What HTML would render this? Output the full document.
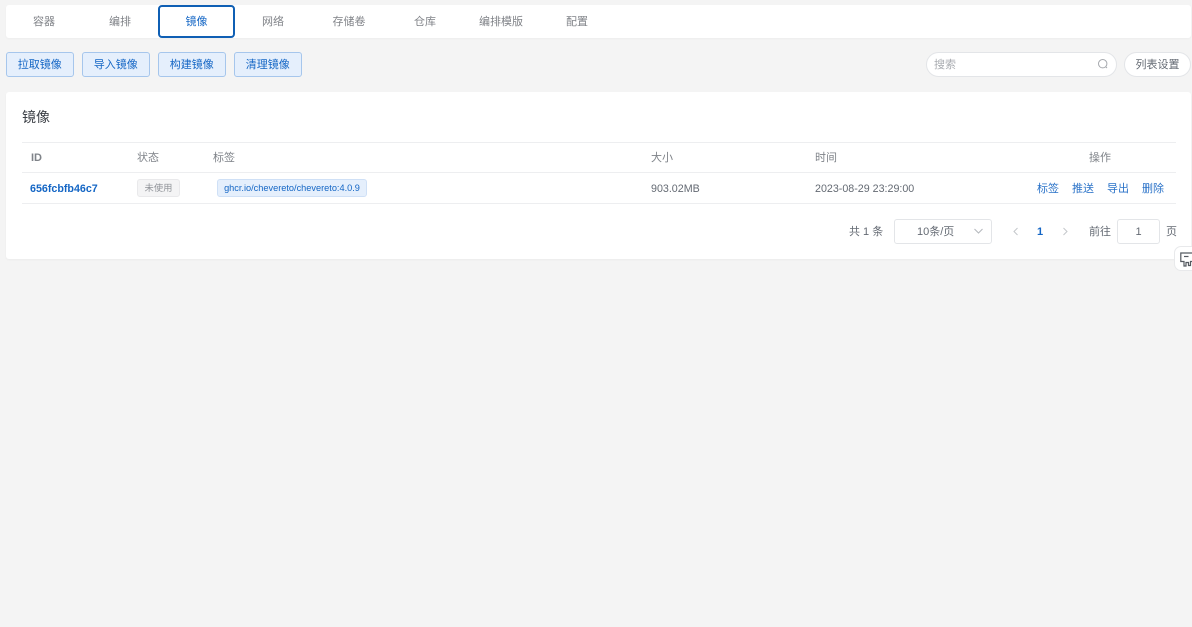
<!DOCTYPE html>
<html lang="zh">
<head>
<meta charset="utf-8">
<style>
html,body{margin:0;padding:0;width:1192px;height:627px;overflow:hidden;background:#f4f4f4;}
body{position:relative;font-family:"Liberation Sans","Noto Sans CJK SC",sans-serif;font-size:11px;color:#646a73;}
.a{position:absolute;white-space:nowrap;line-height:14px;}
.c{text-align:center;}
.box{position:absolute;box-sizing:border-box;}
.btn{position:absolute;box-sizing:border-box;top:52px;height:25px;width:67.5px;background:#e5effc;border:1px solid #a6c6ec;border-radius:3px;color:#1466c5;text-align:center;line-height:24px;font-size:11px;}
.hl{position:absolute;left:22px;width:1154px;height:1px;background:#edeef0;}
.th{color:#7f8389;}
.lnk{color:#2a72c8;}
.n{font-size:10.7px;}
</style>
</head>
<body>
<div class="box" style="left:6px;top:5px;width:1185px;height:33px;background:#fff;border-radius:3px;box-shadow:0 1px 2px rgba(0,0,0,.03)"></div>
<div class="a c" style="left:6px;top:15px;width:76px;color:#808388">容器</div>
<div class="a c" style="left:82px;top:15px;width:76px;color:#808388">编排</div>
<div class="box c" style="left:158px;top:5px;width:77px;height:33px;border:2px solid #0f5fb4;border-radius:4px;background:#fff;color:#1466c5;line-height:30px;text-align:center">镜像</div>
<div class="a c" style="left:235px;top:15px;width:76px;color:#808388">网络</div>
<div class="a c" style="left:311px;top:15px;width:76px;color:#808388">存储卷</div>
<div class="a c" style="left:387px;top:15px;width:76px;color:#808388">仓库</div>
<div class="a c" style="left:463px;top:15px;width:76px;color:#808388">编排模版</div>
<div class="a c" style="left:539px;top:15px;width:76px;color:#808388">配置</div>

<div class="btn" style="left:6px">拉取镜像</div>
<div class="btn" style="left:82px">导入镜像</div>
<div class="btn" style="left:158px">构建镜像</div>
<div class="btn" style="left:234px">清理镜像</div>

<div class="box" style="left:926px;top:52px;width:191px;height:25px;background:#fff;border:1px solid #e3e5e8;border-radius:13px"></div>
<div class="a" style="left:934px;top:58px;color:#a8abb0">搜索</div>
<svg class="box" style="left:1097px;top:58px" width="12" height="12" viewBox="0 0 12 12" fill="none" stroke="#a5a8ad" stroke-width="1"><circle cx="5.7" cy="5.7" r="4.2"/><path d="M8.8 8.8L10 10"/></svg>
<div class="box" style="left:1124px;top:52px;width:67px;height:25px;background:#fff;border:1px solid #e3e5e8;border-radius:13px;text-align:center;line-height:24px;color:#646a73">列表设置</div>

<div class="box" style="left:6px;top:92px;width:1185px;height:167px;background:#fff;border-radius:3px;box-shadow:0 1px 2px rgba(0,0,0,.04)"></div>
<div class="a" style="left:22px;top:108px;font-size:14px;line-height:18px;color:#3d4147">镜像</div>
<div class="hl" style="top:142px"></div>
<div class="hl" style="top:172px"></div>
<div class="hl" style="top:203px"></div>

<div class="a th" style="left:31px;top:151px;font-weight:bold">ID</div>
<div class="a th" style="left:137px;top:151px">状态</div>
<div class="a th" style="left:213px;top:151px">标签</div>
<div class="a th" style="left:651px;top:151px">大小</div>
<div class="a th" style="left:815px;top:151px">时间</div>
<div class="a th" style="left:1089px;top:151px">操作</div>

<div class="a n" style="left:30px;top:182px;font-weight:bold;color:#1466c5">656fcbfb46c7</div>
<div class="box" style="left:137px;top:179px;width:43px;height:18px;background:#f4f4f5;border:1px solid #e9e9eb;border-radius:3px;text-align:center;line-height:17px;color:#909399;font-size:9.3px">未使用</div>
<div class="box" style="left:217px;top:179px;width:150px;height:18px;background:#e5effc;border:1px solid #cfe0f6;border-radius:3px;text-align:center;line-height:17px;color:#1466c5;font-size:9.2px">ghcr.io/chevereto/chevereto:4.0.9</div>
<div class="a n" style="left:651px;top:182px;color:#646a73">903.02MB</div>
<div class="a n" style="left:815px;top:182px;color:#646a73">2023-08-29 23:29:00</div>
<div class="a lnk" style="left:1037px;top:182px">标签</div>
<div class="a lnk" style="left:1072px;top:182px">推送</div>
<div class="a lnk" style="left:1107px;top:182px">导出</div>
<div class="a lnk" style="left:1142px;top:182px">删除</div>

<div class="a" style="left:849px;top:225px;color:#646a73">共 1 条</div>
<div class="box" style="left:894px;top:219px;width:98px;height:25px;background:#fff;border:1px solid #e3e5e8;border-radius:3px"></div>
<div class="a" style="left:917px;top:225px;color:#646a73">10条/页</div>
<svg class="box" style="left:973px;top:227px" width="11" height="8" viewBox="0 0 11 8" fill="none" stroke="#b4b7bc" stroke-width="1"><path d="M1.5 2L5.5 6L9.5 2"/></svg>
<svg class="box" style="left:1012px;top:226px" width="8" height="11" viewBox="0 0 8 11" fill="none" stroke="#c4c7cb" stroke-width="1"><path d="M5.5 2L2 5.5L5.5 9"/></svg>
<div class="a" style="left:1037px;top:225px;font-weight:bold;color:#1466c5">1</div>
<svg class="box" style="left:1061px;top:226px" width="8" height="11" viewBox="0 0 8 11" fill="none" stroke="#c4c7cb" stroke-width="1"><path d="M2.5 2L6 5.5L2.5 9"/></svg>
<div class="a" style="left:1089px;top:225px;color:#646a73">前往</div>
<div class="box" style="left:1117px;top:219px;width:43px;height:25px;background:#fff;border:1px solid #e3e5e8;border-radius:3px;text-align:center;line-height:24px;color:#646a73">1</div>
<div class="a" style="left:1166px;top:225px;color:#646a73">页</div>

<div class="box" style="left:1174px;top:246px;width:24px;height:25px;background:#fff;border:1px solid #e8e9eb;border-radius:7px 0 0 7px"></div>
<svg class="box" style="left:1180px;top:252px" width="12" height="15" viewBox="0 0 12 15" fill="none" stroke="#555a60" stroke-width="1.2"><path d="M0.8 1H13V9.5H10.5V13.5H8.5V10.5H6V14H4V9.5H0.8Z"/><path d="M4 4.5H8.5"/></svg>
</body>
</html>
